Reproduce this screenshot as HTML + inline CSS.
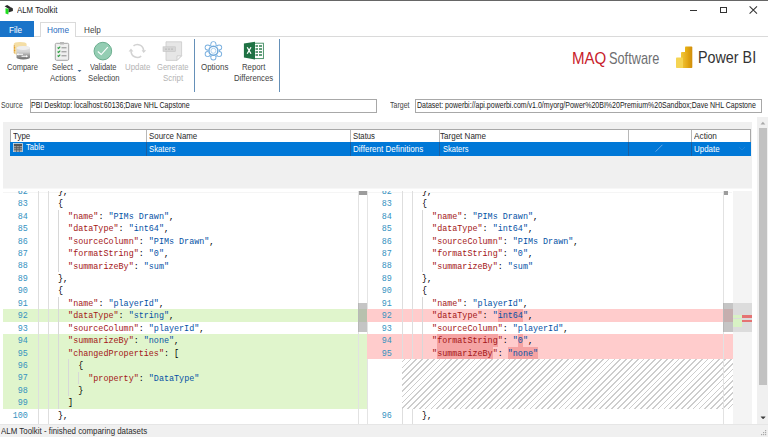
<!DOCTYPE html>
<html><head><meta charset="utf-8">
<style>
*{margin:0;padding:0;box-sizing:border-box}
html,body{width:768px;height:437px;overflow:hidden;background:#fff;font-family:"Liberation Sans",sans-serif;color:#222}
.a{position:absolute;white-space:pre}
.ln{width:26px;text-align:right;font-family:"Liberation Mono",monospace;font-size:8.42px;line-height:12.45px;color:#3592bf}
.cd{font-family:"Liberation Mono",monospace;font-size:8.42px;line-height:12.45px;color:#000}
.pane{position:absolute;top:191px;height:233px;overflow:hidden}
.hatch{background:repeating-linear-gradient(-45deg,#fff 0,#fff 2.9px,#cdcdcd 2.9px,#cdcdcd 4.12px)}
</style></head><body>

<div class="a" style="left:0;top:0;width:768px;height:1px;background:#666"></div>
<div class="a" style="left:0;top:36px;width:768px;height:1px;background:#dadada"></div>
<div class="a" style="left:0;top:21px;width:34px;height:15.6px;background:#1a74c9"></div>
<div class="a" style="left:40px;top:21.6px;width:36px;height:15.5px;background:#fff;border:1px solid #dadada;border-bottom:none"></div>
<div class="a" style="left:194px;top:39px;width:1.2px;height:53px;background:#6590b8"></div>
<div class="a" style="left:279px;top:39px;width:1.2px;height:53px;background:#6590b8"></div>
<div class="a" style="left:30px;top:99.3px;width:347px;height:13.4px;border:1px solid #a8a8a8;background:#fff"></div>
<div class="a" style="left:415.2px;top:99.3px;width:346.7px;height:13.4px;border:1px solid #a8a8a8;background:#fff"></div>
<div class="a" style="left:3px;top:122px;width:749px;height:65.6px;background:#f0f0f0"></div>
<div class="a" style="left:10px;top:129.2px;width:740.6px;height:12.5px;background:#fff;border:1px solid #a8a8a8;border-bottom:none"></div>
<div class="a" style="left:10px;top:141.7px;width:740.6px;height:14px;background:#0078d7"></div>
<div class="a" style="left:146px;top:130px;width:1px;height:11.7px;background:#b8b8b8"></div>
<div class="a" style="left:350px;top:130px;width:1px;height:11.7px;background:#b8b8b8"></div>
<div class="a" style="left:439px;top:130px;width:1px;height:11.7px;background:#b8b8b8"></div>
<div class="a" style="left:628px;top:130px;width:1px;height:11.7px;background:#b8b8b8"></div>
<div class="a" style="left:690.6px;top:130px;width:1px;height:11.7px;background:#b8b8b8"></div>
<div class="a" style="left:146px;top:141.7px;width:1px;height:14px;background:#1d5fa0"></div>
<div class="a" style="left:350px;top:141.7px;width:1px;height:14px;background:#1d5fa0"></div>
<div class="a" style="left:439px;top:141.7px;width:1px;height:14px;background:#1d5fa0"></div>
<div class="a" style="left:628px;top:141.7px;width:1px;height:14px;background:#1d5fa0"></div>
<div class="a" style="left:690.6px;top:141.7px;width:1px;height:14px;background:#1d5fa0"></div>
<div class="a" style="left:3px;top:188px;width:749px;height:1px;background:#f7f7f7"></div>
<div class="a" style="left:3px;top:191.5px;width:729px;height:1px;background:#f5f5f5"></div>
<div class="a" style="left:367px;top:191px;width:1px;height:233px;background:#e4e4e4"></div>
<div class="a" style="left:757px;top:117.4px;width:11px;height:307px;background:#f0f0f0"></div>
<div class="a" style="left:759px;top:127.7px;width:8px;height:257px;background:#c2c2c2"></div>
<svg class="a" style="left:758px;top:120px" width="9" height="6" viewBox="0 0 9 6"><path d="M2.5 4.6 L4.9 1.8 L7.3 4.6 Z" fill="#a8a8a8"/></svg>
<svg class="a" style="left:758px;top:415px" width="9" height="6" viewBox="0 0 9 6"><path d="M2.8 1.4 L7.4 1.4 L7.4 2 L5.3 4 L4.9 4 L2.8 2 Z" fill="#3c3c3c"/></svg>
<div class="a" style="left:0;top:424px;width:768px;height:13px;background:#f0f0f0"></div>
<div class="a" style="left:0;top:424px;width:768px;height:1px;background:#e6e6e6"></div>
<svg class="a" style="left:758px;top:429px" width="10" height="9" viewBox="0 0 10 9"><g fill="#a8a8a8"><rect x="7" y="1" width="1.2" height="1.2"/><rect x="5" y="3" width="1.2" height="1.2"/><rect x="7" y="3" width="1.2" height="1.2"/><rect x="3" y="5" width="1.2" height="1.2"/><rect x="5" y="5" width="1.2" height="1.2"/><rect x="7" y="5" width="1.2" height="1.2"/></g></svg>


<svg class="a" style="left:2px;top:3px" width="14" height="13" viewBox="2 3 14 13">
<path d="M4.6 6.2 L7.2 5.1 L11.2 7.4 L8.5 8.7 Z" fill="#262626"/>
<path d="M8.4 8.6 L11.6 7.6 L12.9 8.6 L12.9 11 L8.4 12.6 Z" fill="#2e2e2e"/>
<path d="M5.5 8.3 L8.4 8.8 L8.4 14.4 L5.5 13.6 Z" fill="#1ee01e"/>
</svg>
<div class="a" style="left:690px;top:10px;width:7.2px;height:1px;background:#333"></div>
<div class="a" style="left:719.8px;top:6.5px;width:7px;height:6.6px;border:1px solid #333"></div>
<svg class="a" style="left:749px;top:5.8px" width="9" height="8" viewBox="0 0 9 8"><path d="M0.6 0.4 L8 7.6 M8 0.4 L0.6 7.6" stroke="#333" stroke-width="1.05"/></svg>

<!-- compare -->
<svg class="a" style="left:12px;top:40px" width="20" height="22" viewBox="0 0 20 22">
<defs><linearGradient id="gc" x1="0" y1="0" x2="0" y2="1"><stop offset="0" stop-color="#e6e6e6"/><stop offset="0.45" stop-color="#d2d2d2"/><stop offset="0.7" stop-color="#9c9c9c"/><stop offset="1" stop-color="#6e6e6e"/></linearGradient></defs>
<path d="M1.8 4 Q1.8 2 8 2 Q14.6 2 14.6 4 L14.6 13 Q14.6 14.6 8 14.6 Q1.8 14.6 1.8 13 Z" fill="#f4dea6"/>
<path d="M1.8 5 L2.8 5 L2.8 13.6 L1.8 13 Z" fill="#e0b060"/>
<circle cx="2.6" cy="7.8" r="0.7" fill="#e8a020"/><circle cx="2.6" cy="10.4" r="0.7" fill="#e8a020"/>
<path d="M4.5 8 Q4.5 6 11.2 6 Q18 6 18 8 L18 17.6 Q18 19.4 11.2 19.4 Q4.5 19.4 4.5 17.6 Z" fill="url(#gc)"/>
<ellipse cx="11.2" cy="8" rx="6.7" ry="1.9" fill="#eeeeee"/>
<path d="M5.5 14.2 L11 14.2 M9.5 16.3 L15 16.3" stroke="#fff" stroke-width="1.1"/>
<path d="M4.6 14.2 L6.4 13 L6.4 15.4 Z M16 16.3 L14.2 15.1 L14.2 17.5 Z" fill="#fff"/>
</svg>
<!-- select actions -->
<svg class="a" style="left:54px;top:41px" width="16" height="20" viewBox="0 0 16 20">
<rect x="1.3" y="2.3" width="13.4" height="17" rx="1.2" fill="#efefef" stroke="#a4a4a4" stroke-width="1"/>
<rect x="6" y="1" width="4" height="2.5" fill="#b8b8b8"/>
<path d="M3.6 6.5 L4.6 7.5 L6.2 5.7 M3.6 10.5 L4.6 11.5 L6.2 9.7 M3.6 14.5 L4.6 15.5 L6.2 13.7" stroke="#2ea043" stroke-width="1.1" fill="none"/>
<path d="M7.5 6.8 L12.5 6.8 M7.5 10.8 L12.5 10.8 M7.5 14.8 L12.5 14.8" stroke="#8c8c8c" stroke-width="1"/>
</svg>
<svg class="a" style="left:77px;top:69px" width="5" height="4" viewBox="0 0 5 4"><path d="M0.5 1 L4.5 1 L2.5 3 Z" fill="#4a6f99"/></svg>
<!-- validate -->
<svg class="a" style="left:92px;top:40px" width="22" height="22" viewBox="0 0 22 22">
<circle cx="10.85" cy="11.1" r="8.8" fill="#94cdb3" stroke="#6aae8e" stroke-width="1"/>
<path d="M5.8 11.5 L9.2 14.5 L15.8 7.2" stroke="#fff" stroke-width="1.1" fill="none"/>
</svg>
<!-- update -->
<svg class="a" style="left:126px;top:40px" width="22" height="22" viewBox="0 0 22 22">
<path d="M7.5 5.8 A6.3 6.3 0 0 1 17.6 10.6" stroke="#d2d2d2" stroke-width="1.6" fill="none"/>
<path d="M15.2 16.2 A6.3 6.3 0 0 1 5.1 11.2" stroke="#d2d2d2" stroke-width="1.6" fill="none"/>
<path d="M15.6 10.2 L20.2 10.2 L17.6 13 Z" fill="#d2d2d2"/>
<path d="M2.6 11.4 L7.4 11.4 L5 8.6 Z" fill="#d2d2d2"/>
</svg>
<!-- generate script -->
<svg class="a" style="left:162px;top:40px" width="22" height="22" viewBox="0 0 22 22">
<path d="M4 1.8 L19.6 1.8 L19.6 15.8 L15 20.4 L4 20.4 Z" fill="#e6e6e6" stroke="#cacaca" stroke-width="0.8"/>
<path d="M15 20.4 L15 15.8 L19.6 15.8 Z" fill="#f6f6f6" stroke="#c8c8c8" stroke-width="0.8"/>
<rect x="1" y="6.8" width="12.4" height="4.7" fill="#d6d6d6" stroke="#c4c4c4" stroke-width="0.6"/>
<path d="M3 9.1 L11.5 9.1" stroke="#bdbdbd" stroke-width="1.2" stroke-dasharray="2 1"/>
</svg>
<!-- options gear -->
<svg class="a" style="left:203px;top:40px" width="22" height="22" viewBox="0 0 22 22">
<g fill="#78afdf"><circle cx="10.40" cy="4.20" r="3.0"/><circle cx="16.12" cy="7.50" r="3.0"/><circle cx="16.12" cy="14.10" r="3.0"/><circle cx="10.40" cy="17.40" r="3.0"/><circle cx="4.68" cy="14.10" r="3.0"/><circle cx="4.68" cy="7.50" r="3.0"/><circle cx="10.4" cy="10.8" r="6.6"/></g>
<g fill="#fff"><circle cx="10.40" cy="4.20" r="2.1"/><circle cx="16.12" cy="7.50" r="2.1"/><circle cx="16.12" cy="14.10" r="2.1"/><circle cx="10.40" cy="17.40" r="2.1"/><circle cx="4.68" cy="14.10" r="2.1"/><circle cx="4.68" cy="7.50" r="2.1"/><circle cx="10.4" cy="10.8" r="5.7"/></g>
<circle cx="10.4" cy="10.8" r="4.5" fill="none" stroke="#6fa9db" stroke-width="1.5"/>
<circle cx="10.4" cy="10.8" r="2.5" fill="none" stroke="#9cc6ea" stroke-width="0.8"/>
</svg>
<!-- excel -->
<svg class="a" style="left:243px;top:40px" width="22" height="22" viewBox="0 0 22 22">
<rect x="11" y="3.2" width="9.4" height="15.4" fill="#fff" stroke="#3c8b5f" stroke-width="0.9"/>
<path d="M12.5 6 L15 6 M16 6 L19 6 M12.5 9 L15 9 M16 9 L19 9 M12.5 12 L15 12 M16 12 L19 12 M12.5 15 L15 15 M16 15 L19 15" stroke="#2f7d4f" stroke-width="1.4"/>
<path d="M0.9 3.5 L12 1.8 L12 19.4 L0.9 17.6 Z" fill="#1f7244"/>
<path d="M4.2 7.2 L8 13.8 M8 7.2 L4.2 13.8" stroke="#fff" stroke-width="1.3"/>
</svg>
<!-- power bi -->
<svg class="a" style="left:675px;top:45px" width="19" height="24" viewBox="0 0 19 24">
<defs><linearGradient id="pb3" x1="0" y1="0" x2="1" y2="0"><stop offset="0" stop-color="#eab515"/><stop offset="1" stop-color="#d18d0b"/></linearGradient>
<linearGradient id="pb2" x1="0" y1="0" x2="1" y2="0"><stop offset="0" stop-color="#f2c93a"/><stop offset="1" stop-color="#e2a514"/></linearGradient></defs>
<rect x="10" y="1.6" width="7.3" height="21.4" rx="0.8" fill="url(#pb3)"/>
<rect x="6" y="7" width="7" height="16" rx="0.8" fill="url(#pb2)"/>
<rect x="1" y="12.5" width="7" height="10.5" rx="0.8" fill="#f5d453"/>
</svg>
<!-- table icon -->
<svg class="a" style="left:13px;top:143px" width="10" height="9" viewBox="0 0 10 9">
<rect x="0.5" y="0.5" width="9" height="8.5" fill="#9a9a9a" stroke="#f0f0f0" stroke-width="0.6"/>
<rect x="1" y="1" width="8" height="2" fill="#555"/>
<path d="M1 4.5 L9 4.5 M1 6.3 L9 6.3 M3.6 3 L3.6 9 M6.3 3 L6.3 9" stroke="#555" stroke-width="0.7"/>
</svg>
<svg class="a" style="left:654px;top:144px" width="10" height="9" viewBox="0 0 10 9"><path d="M1.6 7.6 L8.4 0.8" stroke="#6aa8e6" stroke-width="1"/></svg>
<svg class="a" style="left:738px;top:146px" width="8" height="5" viewBox="0 0 8 5"><path d="M1 1 L4 4 L7 1" stroke="#2a88d8" stroke-width="0.7" fill="none"/></svg>


<div class="pane" style="left:3px;width:364px">
<div class="a" style="left:0;top:118.30px;width:364px;height:12.45px;background:#e0f5cc"></div>
<div class="a" style="left:0;top:143.20px;width:364px;height:12.45px;background:#e0f5cc"></div>
<div class="a" style="left:0;top:155.65px;width:364px;height:12.45px;background:#e0f5cc"></div>
<div class="a" style="left:0;top:168.10px;width:364px;height:12.45px;background:#e0f5cc"></div>
<div class="a" style="left:0;top:180.55px;width:364px;height:12.45px;background:#e0f5cc"></div>
<div class="a" style="left:0;top:193.00px;width:364px;height:12.45px;background:#e0f5cc"></div>
<div class="a" style="left:0;top:205.45px;width:364px;height:12.45px;background:#e0f5cc"></div>
<div class="a" style="left:35px;top:0;width:1px;height:233px;background:#dedede"></div>
<div class="a" style="left:45px;top:0;width:1px;height:233px;background:#dedede"></div>
<div class="a ln" style="left:-1.2px;top:-5.30px">82</div>
<div class="a cd" style="left:55px;top:-5.20px">},</div>
<div class="a ln" style="left:-1.2px;top:7.15px">83</div>
<div class="a cd" style="left:55px;top:7.25px">{</div>
<div class="a ln" style="left:-1.2px;top:19.60px">84</div>
<div class="a cd" style="left:55px;top:19.70px">  <span style="color:#a31515">&quot;name&quot;</span>: <span style="color:#0451a5">&quot;PIMs Drawn&quot;</span>,</div>
<div class="a ln" style="left:-1.2px;top:32.05px">85</div>
<div class="a cd" style="left:55px;top:32.15px">  <span style="color:#a31515">&quot;dataType&quot;</span>: <span style="color:#0451a5">&quot;int64&quot;</span>,</div>
<div class="a ln" style="left:-1.2px;top:44.50px">86</div>
<div class="a cd" style="left:55px;top:44.60px">  <span style="color:#a31515">&quot;sourceColumn&quot;</span>: <span style="color:#0451a5">&quot;PIMs Drawn&quot;</span>,</div>
<div class="a ln" style="left:-1.2px;top:56.95px">87</div>
<div class="a cd" style="left:55px;top:57.05px">  <span style="color:#a31515">&quot;formatString&quot;</span>: <span style="color:#0451a5">&quot;0&quot;</span>,</div>
<div class="a ln" style="left:-1.2px;top:69.40px">88</div>
<div class="a cd" style="left:55px;top:69.50px">  <span style="color:#a31515">&quot;summarizeBy&quot;</span>: <span style="color:#0451a5">&quot;sum&quot;</span></div>
<div class="a ln" style="left:-1.2px;top:81.85px">89</div>
<div class="a cd" style="left:55px;top:81.95px">},</div>
<div class="a ln" style="left:-1.2px;top:94.30px">90</div>
<div class="a cd" style="left:55px;top:94.40px">{</div>
<div class="a ln" style="left:-1.2px;top:106.75px">91</div>
<div class="a cd" style="left:55px;top:106.85px">  <span style="color:#a31515">&quot;name&quot;</span>: <span style="color:#0451a5">&quot;playerId&quot;</span>,</div>
<div class="a ln" style="left:-1.2px;top:119.20px">92</div>
<div class="a cd" style="left:55px;top:119.30px">  <span style="color:#a31515">&quot;dataType&quot;</span>: <span style="color:#0451a5">&quot;string&quot;</span>,</div>
<div class="a ln" style="left:-1.2px;top:131.65px">93</div>
<div class="a cd" style="left:55px;top:131.75px">  <span style="color:#a31515">&quot;sourceColumn&quot;</span>: <span style="color:#0451a5">&quot;playerId&quot;</span>,</div>
<div class="a ln" style="left:-1.2px;top:144.10px">94</div>
<div class="a cd" style="left:55px;top:144.20px">  <span style="color:#a31515">&quot;summarizeBy&quot;</span>: <span style="color:#0451a5">&quot;none&quot;</span>,</div>
<div class="a ln" style="left:-1.2px;top:156.55px">95</div>
<div class="a cd" style="left:55px;top:156.65px">  <span style="color:#a31515">&quot;changedProperties&quot;</span>: [</div>
<div class="a ln" style="left:-1.2px;top:169.00px">96</div>
<div class="a cd" style="left:55px;top:169.10px">    {</div>
<div class="a ln" style="left:-1.2px;top:181.45px">97</div>
<div class="a cd" style="left:55px;top:181.55px">      <span style="color:#a31515">&quot;property&quot;</span>: <span style="color:#0451a5">&quot;DataType&quot;</span></div>
<div class="a ln" style="left:-1.2px;top:193.90px">98</div>
<div class="a cd" style="left:55px;top:194.00px">    }</div>
<div class="a ln" style="left:-1.2px;top:206.35px">99</div>
<div class="a cd" style="left:55px;top:206.45px">  ]</div>
<div class="a ln" style="left:-1.2px;top:218.80px">100</div>
<div class="a cd" style="left:55px;top:218.90px">},</div>
<div class="a" style="left:55px;top:18.70px;width:1px;height:62.25px;background:#d8d8d8"></div>
<div class="a" style="left:55px;top:105.85px;width:1px;height:112.05px;background:#d8d8d8"></div>
<div class="a" style="left:65px;top:168.10px;width:1px;height:37.35px;background:#d8d8d8"></div>
<div class="a" style="left:75px;top:180.55px;width:1px;height:12.45px;background:#d8d8d8"></div>
<div class="a" style="left:355px;top:0;width:1px;height:233px;background:#e2e2e2"></div>
<div class="a" style="left:364px;top:0;width:0;height:233px"></div>
<div class="a" style="left:356px;top:0;width:8.6px;height:3.8px;background:#9c9c9c"></div>
<div class="a" style="left:355.3px;top:112px;width:9px;height:28.7px;background:rgba(150,150,150,0.55)"></div>
</div>
<div class="pane" style="left:367px;width:366px">
<div class="a" style="left:0;top:118.30px;width:366px;height:12.45px;background:#ffcccc"></div>
<div class="a" style="left:0;top:143.20px;width:366px;height:12.45px;background:#ffcccc"></div>
<div class="a" style="left:0;top:155.65px;width:366px;height:12.45px;background:#ffcccc"></div>
<div class="a" style="left:130.75px;top:118.30px;width:25.25px;height:12.45px;background:#f5a3a3"></div>
<div class="a" style="left:70.15px;top:143.20px;width:60.60px;height:12.45px;background:#f5a3a3"></div>
<div class="a" style="left:150.95px;top:143.20px;width:5.05px;height:12.45px;background:#f5a3a3"></div>
<div class="a" style="left:70.15px;top:155.65px;width:55.55px;height:12.45px;background:#f5a3a3"></div>
<div class="a" style="left:140.85px;top:155.65px;width:30.30px;height:12.45px;background:#f5a3a3"></div>
<div class="a" style="left:35px;top:0;width:1px;height:233px;background:#dedede"></div>
<div class="a" style="left:45px;top:0;width:1px;height:233px;background:#dedede"></div>
<div class="a ln" style="left:-1.2px;top:-5.30px">82</div>
<div class="a cd" style="left:55px;top:-5.20px">},</div>
<div class="a ln" style="left:-1.2px;top:7.15px">83</div>
<div class="a cd" style="left:55px;top:7.25px">{</div>
<div class="a ln" style="left:-1.2px;top:19.60px">84</div>
<div class="a cd" style="left:55px;top:19.70px">  <span style="color:#a31515">&quot;name&quot;</span>: <span style="color:#0451a5">&quot;PIMs Drawn&quot;</span>,</div>
<div class="a ln" style="left:-1.2px;top:32.05px">85</div>
<div class="a cd" style="left:55px;top:32.15px">  <span style="color:#a31515">&quot;dataType&quot;</span>: <span style="color:#0451a5">&quot;int64&quot;</span>,</div>
<div class="a ln" style="left:-1.2px;top:44.50px">86</div>
<div class="a cd" style="left:55px;top:44.60px">  <span style="color:#a31515">&quot;sourceColumn&quot;</span>: <span style="color:#0451a5">&quot;PIMs Drawn&quot;</span>,</div>
<div class="a ln" style="left:-1.2px;top:56.95px">87</div>
<div class="a cd" style="left:55px;top:57.05px">  <span style="color:#a31515">&quot;formatString&quot;</span>: <span style="color:#0451a5">&quot;0&quot;</span>,</div>
<div class="a ln" style="left:-1.2px;top:69.40px">88</div>
<div class="a cd" style="left:55px;top:69.50px">  <span style="color:#a31515">&quot;summarizeBy&quot;</span>: <span style="color:#0451a5">&quot;sum&quot;</span></div>
<div class="a ln" style="left:-1.2px;top:81.85px">89</div>
<div class="a cd" style="left:55px;top:81.95px">},</div>
<div class="a ln" style="left:-1.2px;top:94.30px">90</div>
<div class="a cd" style="left:55px;top:94.40px">{</div>
<div class="a ln" style="left:-1.2px;top:106.75px">91</div>
<div class="a cd" style="left:55px;top:106.85px">  <span style="color:#a31515">&quot;name&quot;</span>: <span style="color:#0451a5">&quot;playerId&quot;</span>,</div>
<div class="a ln" style="left:-1.2px;top:119.20px">92</div>
<div class="a cd" style="left:55px;top:119.30px">  <span style="color:#a31515">&quot;dataType&quot;</span>: <span style="color:#0451a5">&quot;int64&quot;</span>,</div>
<div class="a ln" style="left:-1.2px;top:131.65px">93</div>
<div class="a cd" style="left:55px;top:131.75px">  <span style="color:#a31515">&quot;sourceColumn&quot;</span>: <span style="color:#0451a5">&quot;playerId&quot;</span>,</div>
<div class="a ln" style="left:-1.2px;top:144.10px">94</div>
<div class="a cd" style="left:55px;top:144.20px">  <span style="color:#a31515">&quot;formatString&quot;</span>: <span style="color:#0451a5">&quot;0&quot;</span>,</div>
<div class="a ln" style="left:-1.2px;top:156.55px">95</div>
<div class="a cd" style="left:55px;top:156.65px">  <span style="color:#a31515">&quot;summarizeBy&quot;</span>: <span style="color:#0451a5">&quot;none&quot;</span></div>
<div class="a ln" style="left:-1.2px;top:218.80px">96</div>
<div class="a cd" style="left:55px;top:218.90px">},</div>
<div class="a hatch" style="left:35px;top:168.10px;width:331px;height:49.80px"></div>
<div class="a" style="left:55px;top:18.70px;width:1px;height:62.25px;background:#d8d8d8"></div>
<div class="a" style="left:55px;top:105.85px;width:1px;height:62.25px;background:#d8d8d8"></div>
<div class="a" style="left:356px;top:0;width:1px;height:233px;background:#e2e2e2"></div>
<div class="a" style="left:357px;top:0;width:4px;height:3.8px;background:#9c9c9c"></div>
<div class="a" style="left:356.3px;top:112.2px;width:9.4px;height:28.4px;background:rgba(150,150,150,0.55)"></div>
</div>
<div class="a" style="left:732.7px;top:191px;width:19px;height:233px;background:#f4f4f4"></div>
<div class="a" style="left:732.7px;top:303.2px;width:19px;height:28.4px;background:#dcdcdc"></div>
<div class="a" style="left:732.7px;top:315px;width:9.5px;height:3px;background:#d8f2c4"></div>
<div class="a" style="left:732.7px;top:319px;width:9.5px;height:7.8px;background:#d8f2c4"></div>
<div class="a" style="left:742.2px;top:315.2px;width:9.4px;height:2.8px;background:#e57373"></div>
<div class="a" style="left:742.2px;top:319.5px;width:9.4px;height:2.6px;background:#e57373"></div>

<div class="a" style="left:17.20px;top:6.00px;font-family:'Liberation Sans';font-size:8.82px;line-height:8.82px;color:#222222;transform:scaleX(0.8903);transform-origin:0 0;">ALM Toolkit</div>
<div class="a" style="left:9.36px;top:25.84px;font-family:'Liberation Sans';font-size:9.24px;line-height:9.24px;color:#ffffff;transform:scaleX(0.8841);transform-origin:0 0;">File</div>
<div class="a" style="left:46.75px;top:25.64px;font-family:'Liberation Sans';font-size:9.24px;line-height:9.24px;color:#2b6dbf;transform:scaleX(0.8955);transform-origin:0 0;">Home</div>
<div class="a" style="left:83.86px;top:25.64px;font-family:'Liberation Sans';font-size:9.24px;line-height:9.24px;color:#444444;transform:scaleX(0.8819);transform-origin:0 0;">Help</div>
<div class="a" style="left:7.05px;top:62.22px;font-family:'Liberation Sans';font-size:9.39px;line-height:9.39px;color:#444444;transform:scaleX(0.8046);transform-origin:0 0;">Compare</div>
<div class="a" style="left:52.37px;top:62.22px;font-family:'Liberation Sans';font-size:9.39px;line-height:9.39px;color:#444444;transform:scaleX(0.7976);transform-origin:0 0;">Select</div>
<div class="a" style="left:50.30px;top:72.52px;font-family:'Liberation Sans';font-size:9.39px;line-height:9.39px;color:#444444;transform:scaleX(0.8429);transform-origin:0 0;">Actions</div>
<div class="a" style="left:89.80px;top:62.22px;font-family:'Liberation Sans';font-size:9.39px;line-height:9.39px;color:#444444;transform:scaleX(0.7977);transform-origin:0 0;">Validate</div>
<div class="a" style="left:87.76px;top:72.52px;font-family:'Liberation Sans';font-size:9.39px;line-height:9.39px;color:#444444;transform:scaleX(0.8202);transform-origin:0 0;">Selection</div>
<div class="a" style="left:125.41px;top:62.22px;font-family:'Liberation Sans';font-size:9.39px;line-height:9.39px;color:#b4b4b4;transform:scaleX(0.8396);transform-origin:0 0;">Update</div>
<div class="a" style="left:156.95px;top:62.22px;font-family:'Liberation Sans';font-size:9.39px;line-height:9.39px;color:#b4b4b4;transform:scaleX(0.8064);transform-origin:0 0;">Generate</div>
<div class="a" style="left:162.75px;top:72.52px;font-family:'Liberation Sans';font-size:9.39px;line-height:9.39px;color:#b4b4b4;transform:scaleX(0.8427);transform-origin:0 0;">Script</div>
<div class="a" style="left:200.63px;top:62.22px;font-family:'Liberation Sans';font-size:9.39px;line-height:9.39px;color:#444444;transform:scaleX(0.8477);transform-origin:0 0;">Options</div>
<div class="a" style="left:242.09px;top:62.22px;font-family:'Liberation Sans';font-size:9.39px;line-height:9.39px;color:#444444;transform:scaleX(0.8299);transform-origin:0 0;">Report</div>
<div class="a" style="left:234.39px;top:72.52px;font-family:'Liberation Sans';font-size:9.39px;line-height:9.39px;color:#444444;transform:scaleX(0.8276);transform-origin:0 0;">Differences</div>
<div class="a" style="left:572.12px;top:50.56px;font-family:'Liberation Sans';font-size:15.93px;line-height:15.93px;color:#c8202a;transform:scaleX(0.9462);transform-origin:0 0;">MAQ</div>
<div class="a" style="left:608.90px;top:50.56px;font-family:'Liberation Sans';font-size:15.93px;line-height:15.93px;color:#6d6e71;transform:scaleX(0.8012);transform-origin:0 0;">Software</div>
<div class="a" style="left:697.98px;top:49.30px;font-family:'Liberation Sans';font-size:16.36px;line-height:16.36px;color:#333333;transform:scaleX(0.8758);transform-origin:0 0;">Power BI</div>
<div class="a" style="left:1.39px;top:100.90px;font-family:'Liberation Sans';font-size:8.82px;line-height:8.82px;color:#444444;transform:scaleX(0.7801);transform-origin:0 0;">Source</div>
<div class="a" style="left:31.35px;top:100.78px;font-family:'Liberation Sans';font-size:8.96px;line-height:8.96px;color:#1a1a1a;transform:scaleX(0.7865);transform-origin:0 0;">PBI Desktop: localhost:60136;Dave NHL Capstone</div>
<div class="a" style="left:390.29px;top:100.90px;font-family:'Liberation Sans';font-size:8.82px;line-height:8.82px;color:#444444;transform:scaleX(0.7951);transform-origin:0 0;">Target</div>
<div class="a" style="left:416.65px;top:100.78px;font-family:'Liberation Sans';font-size:8.96px;line-height:8.96px;color:#1a1a1a;transform:scaleX(0.7841);transform-origin:0 0;">Dataset: powerbi://api.powerbi.com/v1.0/myorg/Power%20BI%20Premium%20Sandbox;Dave NHL Capstone</div>
<div class="a" style="left:12.98px;top:131.90px;font-family:'Liberation Sans';font-size:8.82px;line-height:8.82px;color:#2a2a2a;transform:scaleX(0.9022);transform-origin:0 0;">Type</div>
<div class="a" style="left:149.25px;top:131.90px;font-family:'Liberation Sans';font-size:8.82px;line-height:8.82px;color:#2a2a2a;transform:scaleX(0.8953);transform-origin:0 0;">Source Name</div>
<div class="a" style="left:353.06px;top:131.90px;font-family:'Liberation Sans';font-size:8.82px;line-height:8.82px;color:#2a2a2a;transform:scaleX(0.8795);transform-origin:0 0;">Status</div>
<div class="a" style="left:440.27px;top:131.90px;font-family:'Liberation Sans';font-size:8.82px;line-height:8.82px;color:#2a2a2a;transform:scaleX(0.9123);transform-origin:0 0;">Target Name</div>
<div class="a" style="left:694.20px;top:131.90px;font-family:'Liberation Sans';font-size:8.82px;line-height:8.82px;color:#2a2a2a;transform:scaleX(0.9370);transform-origin:0 0;">Action</div>
<div class="a" style="left:25.88px;top:143.34px;font-family:'Liberation Sans';font-size:9.24px;line-height:9.24px;color:#ffffff;transform:scaleX(0.8294);transform-origin:0 0;">Table</div>
<div class="a" style="left:149.26px;top:144.88px;font-family:'Liberation Sans';font-size:8.96px;line-height:8.96px;color:#ffffff;transform:scaleX(0.8653);transform-origin:0 0;">Skaters</div>
<div class="a" style="left:353.12px;top:144.88px;font-family:'Liberation Sans';font-size:8.96px;line-height:8.96px;color:#ffffff;transform:scaleX(0.9001);transform-origin:0 0;">Different Definitions</div>
<div class="a" style="left:442.67px;top:144.88px;font-family:'Liberation Sans';font-size:8.96px;line-height:8.96px;color:#ffffff;transform:scaleX(0.8385);transform-origin:0 0;">Skaters</div>
<div class="a" style="left:693.70px;top:144.88px;font-family:'Liberation Sans';font-size:8.96px;line-height:8.96px;color:#ffffff;transform:scaleX(0.8867);transform-origin:0 0;">Update</div>
<div class="a" style="left:0.85px;top:426.94px;font-family:'Liberation Sans';font-size:9.24px;line-height:9.24px;color:#2a2a2a;transform:scaleX(0.8556);transform-origin:0 0;">ALM Toolkit - finished comparing datasets</div>
</body></html>
